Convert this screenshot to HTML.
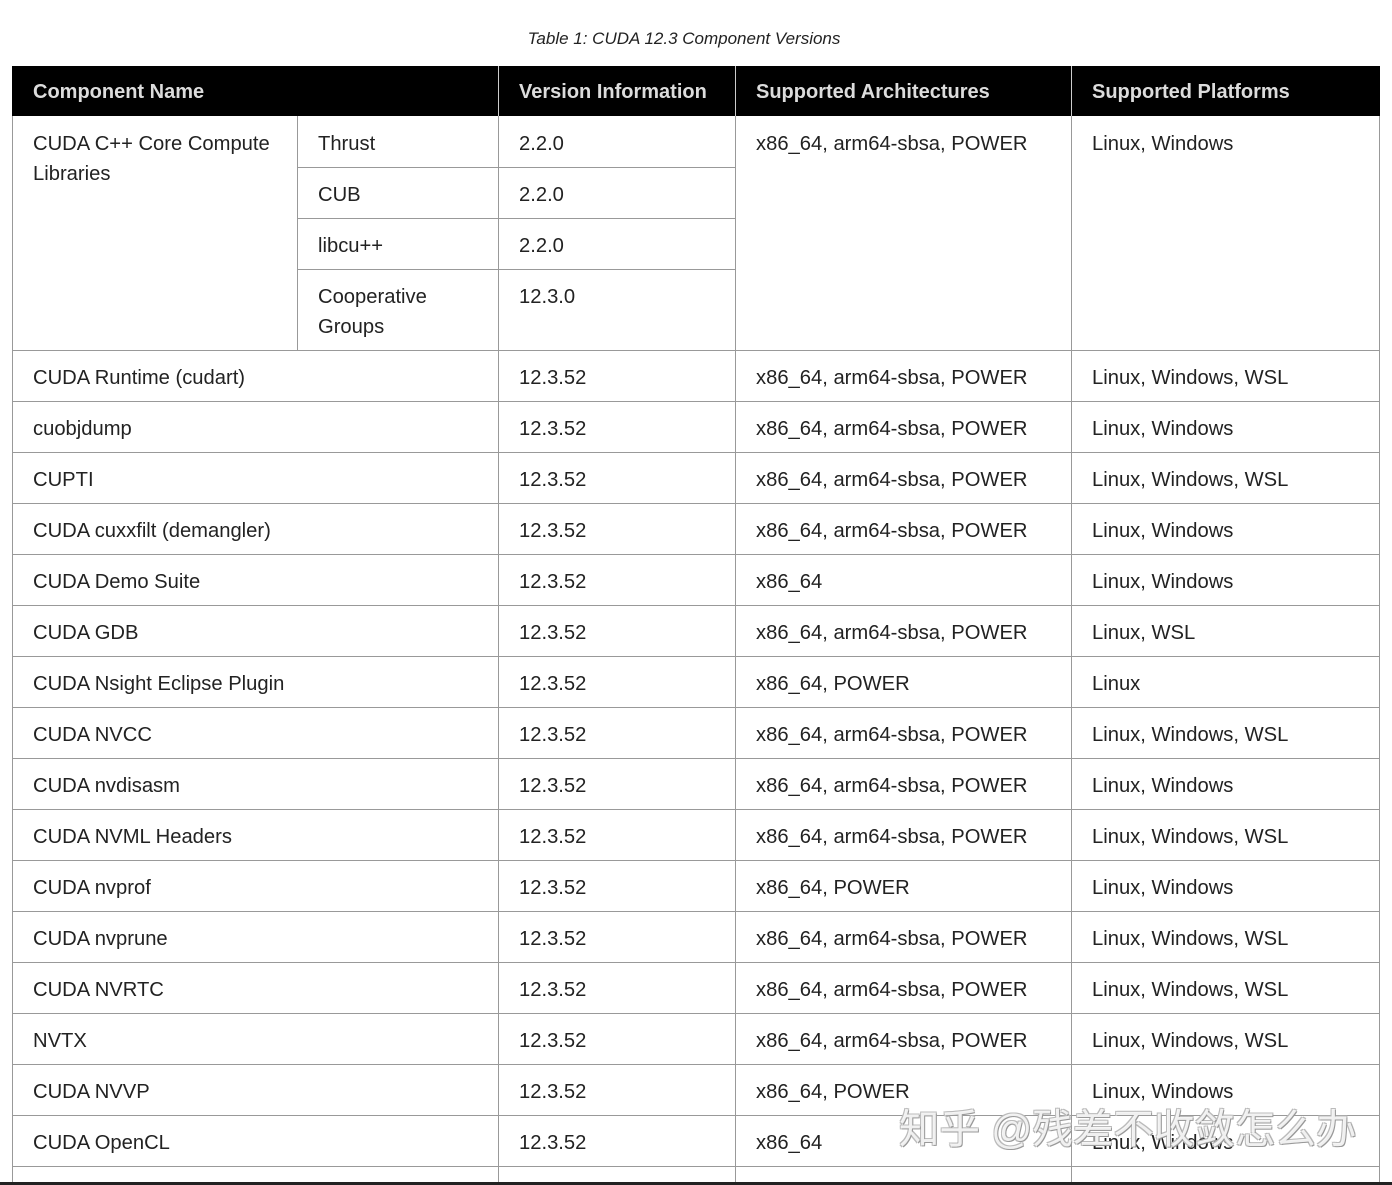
<!DOCTYPE html>
<html><head><meta charset="utf-8"><style>
html,body{margin:0;padding:0;background:#fff;width:1392px;height:1185px;overflow:hidden;position:relative;font-family:"Liberation Sans","Noto Sans CJK SC",sans-serif;}
.t{position:absolute;font-size:20.2px;color:#222;line-height:30px;white-space:nowrap;margin-top:2px;}
.h{position:absolute;font-size:20px;font-weight:bold;color:#dcdcdc;line-height:30px;white-space:nowrap;margin-top:1px;}
.hl{position:absolute;height:1px;background:#999;}
.vl{position:absolute;width:1px;background:#999;}
</style></head><body>
<div style="position:absolute;left:0;width:1368px;top:29px;text-align:center;font-style:italic;font-size:17px;color:#222;">Table 1: CUDA 12.3 Component Versions</div>
<div style="position:absolute;left:12px;top:66px;width:1368px;height:50px;background:#000;"></div>
<div style="position:absolute;left:498px;top:66px;width:1px;height:50px;background:#ccc"></div>
<div style="position:absolute;left:735px;top:66px;width:1px;height:50px;background:#ccc"></div>
<div style="position:absolute;left:1071px;top:66px;width:1px;height:50px;background:#ccc"></div>
<div class="h" style="left:33px;top:76px">Component Name</div>
<div class="h" style="left:519px;top:76px">Version Information</div>
<div class="h" style="left:756px;top:76px">Supported Architectures</div>
<div class="h" style="left:1092px;top:76px">Supported Platforms</div>

<div class="vl" style="left:12px;top:116px;height:1069px"></div>
<div class="vl" style="left:297px;top:116px;height:234px"></div>
<div class="vl" style="left:498px;top:116px;height:1069px"></div>
<div class="vl" style="left:735px;top:116px;height:1069px"></div>
<div class="vl" style="left:1071px;top:116px;height:1069px"></div>
<div class="vl" style="left:1379px;top:116px;height:1069px"></div>
<div class="hl" style="left:297px;width:438px;top:167px"></div>
<div class="hl" style="left:297px;width:438px;top:218px"></div>
<div class="hl" style="left:297px;width:438px;top:269px"></div>

<div class="t" style="left:33px;top:127px">CUDA C++ Core Compute<br>Libraries</div>
<div class="t" style="left:318px;top:127px">Thrust</div><div class="t" style="left:519px;top:127px">2.2.0</div>
<div class="t" style="left:318px;top:178px">CUB</div><div class="t" style="left:519px;top:178px">2.2.0</div>
<div class="t" style="left:318px;top:229px">libcu++</div><div class="t" style="left:519px;top:229px">2.2.0</div>
<div class="t" style="left:318px;top:280px">Cooperative<br>Groups</div><div class="t" style="left:519px;top:280px">12.3.0</div>
<div class="t" style="left:756px;top:127px">x86_64, arm64-sbsa, POWER</div>
<div class="t" style="left:1092px;top:127px">Linux, Windows</div>

<div class="hl" style="left:12px;width:1368px;top:350px"></div>
<div class="t" style="left:33px;top:361px">CUDA Runtime (cudart)</div><div class="t" style="left:519px;top:361px">12.3.52</div><div class="t" style="left:756px;top:361px">x86_64, arm64-sbsa, POWER</div><div class="t" style="left:1092px;top:361px">Linux, Windows, WSL</div>
<div class="hl" style="left:12px;width:1368px;top:401px"></div>
<div class="t" style="left:33px;top:412px">cuobjdump</div><div class="t" style="left:519px;top:412px">12.3.52</div><div class="t" style="left:756px;top:412px">x86_64, arm64-sbsa, POWER</div><div class="t" style="left:1092px;top:412px">Linux, Windows</div>
<div class="hl" style="left:12px;width:1368px;top:452px"></div>
<div class="t" style="left:33px;top:463px">CUPTI</div><div class="t" style="left:519px;top:463px">12.3.52</div><div class="t" style="left:756px;top:463px">x86_64, arm64-sbsa, POWER</div><div class="t" style="left:1092px;top:463px">Linux, Windows, WSL</div>
<div class="hl" style="left:12px;width:1368px;top:503px"></div>
<div class="t" style="left:33px;top:514px">CUDA cuxxfilt (demangler)</div><div class="t" style="left:519px;top:514px">12.3.52</div><div class="t" style="left:756px;top:514px">x86_64, arm64-sbsa, POWER</div><div class="t" style="left:1092px;top:514px">Linux, Windows</div>
<div class="hl" style="left:12px;width:1368px;top:554px"></div>
<div class="t" style="left:33px;top:565px">CUDA Demo Suite</div><div class="t" style="left:519px;top:565px">12.3.52</div><div class="t" style="left:756px;top:565px">x86_64</div><div class="t" style="left:1092px;top:565px">Linux, Windows</div>
<div class="hl" style="left:12px;width:1368px;top:605px"></div>
<div class="t" style="left:33px;top:616px">CUDA GDB</div><div class="t" style="left:519px;top:616px">12.3.52</div><div class="t" style="left:756px;top:616px">x86_64, arm64-sbsa, POWER</div><div class="t" style="left:1092px;top:616px">Linux, WSL</div>
<div class="hl" style="left:12px;width:1368px;top:656px"></div>
<div class="t" style="left:33px;top:667px">CUDA Nsight Eclipse Plugin</div><div class="t" style="left:519px;top:667px">12.3.52</div><div class="t" style="left:756px;top:667px">x86_64, POWER</div><div class="t" style="left:1092px;top:667px">Linux</div>
<div class="hl" style="left:12px;width:1368px;top:707px"></div>
<div class="t" style="left:33px;top:718px">CUDA NVCC</div><div class="t" style="left:519px;top:718px">12.3.52</div><div class="t" style="left:756px;top:718px">x86_64, arm64-sbsa, POWER</div><div class="t" style="left:1092px;top:718px">Linux, Windows, WSL</div>
<div class="hl" style="left:12px;width:1368px;top:758px"></div>
<div class="t" style="left:33px;top:769px">CUDA nvdisasm</div><div class="t" style="left:519px;top:769px">12.3.52</div><div class="t" style="left:756px;top:769px">x86_64, arm64-sbsa, POWER</div><div class="t" style="left:1092px;top:769px">Linux, Windows</div>
<div class="hl" style="left:12px;width:1368px;top:809px"></div>
<div class="t" style="left:33px;top:820px">CUDA NVML Headers</div><div class="t" style="left:519px;top:820px">12.3.52</div><div class="t" style="left:756px;top:820px">x86_64, arm64-sbsa, POWER</div><div class="t" style="left:1092px;top:820px">Linux, Windows, WSL</div>
<div class="hl" style="left:12px;width:1368px;top:860px"></div>
<div class="t" style="left:33px;top:871px">CUDA nvprof</div><div class="t" style="left:519px;top:871px">12.3.52</div><div class="t" style="left:756px;top:871px">x86_64, POWER</div><div class="t" style="left:1092px;top:871px">Linux, Windows</div>
<div class="hl" style="left:12px;width:1368px;top:911px"></div>
<div class="t" style="left:33px;top:922px">CUDA nvprune</div><div class="t" style="left:519px;top:922px">12.3.52</div><div class="t" style="left:756px;top:922px">x86_64, arm64-sbsa, POWER</div><div class="t" style="left:1092px;top:922px">Linux, Windows, WSL</div>
<div class="hl" style="left:12px;width:1368px;top:962px"></div>
<div class="t" style="left:33px;top:973px">CUDA NVRTC</div><div class="t" style="left:519px;top:973px">12.3.52</div><div class="t" style="left:756px;top:973px">x86_64, arm64-sbsa, POWER</div><div class="t" style="left:1092px;top:973px">Linux, Windows, WSL</div>
<div class="hl" style="left:12px;width:1368px;top:1013px"></div>
<div class="t" style="left:33px;top:1024px">NVTX</div><div class="t" style="left:519px;top:1024px">12.3.52</div><div class="t" style="left:756px;top:1024px">x86_64, arm64-sbsa, POWER</div><div class="t" style="left:1092px;top:1024px">Linux, Windows, WSL</div>
<div class="hl" style="left:12px;width:1368px;top:1064px"></div>
<div class="t" style="left:33px;top:1075px">CUDA NVVP</div><div class="t" style="left:519px;top:1075px">12.3.52</div><div class="t" style="left:756px;top:1075px">x86_64, POWER</div><div class="t" style="left:1092px;top:1075px">Linux, Windows</div>
<div class="hl" style="left:12px;width:1368px;top:1115px"></div>
<div class="t" style="left:33px;top:1126px">CUDA OpenCL</div><div class="t" style="left:519px;top:1126px">12.3.52</div><div class="t" style="left:756px;top:1126px">x86_64</div><div class="t" style="left:1092px;top:1126px">Linux, Windows</div>
<div class="hl" style="left:12px;width:1368px;top:1166px"></div>
<div style="position:absolute;left:0;top:1182px;width:1392px;height:3px;background:#222;"></div>

<div style="position:absolute;left:899px;top:1104px;font-size:40.5px;line-height:50px;color:rgba(255,255,255,0.85);white-space:nowrap;font-family:'Liberation Sans','Noto Sans CJK SC',sans-serif;text-shadow:1px 1px 0 #999,-1px -1px 0 #bbb,1px -1px 0 #bbb,-1px 1px 0 #bbb;">知乎 @残差不收敛怎么办</div>
</body></html>
